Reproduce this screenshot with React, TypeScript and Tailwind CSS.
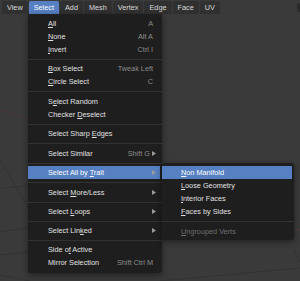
import React from 'react';

type Row =
  | { sep: true; h: number }
  | { sep?: false; label: string; key?: number; shortcut?: string; sub?: boolean; active?: boolean; off?: boolean };

const mainMenu: Row[] = [
  { label: 'All', key: 0, shortcut: 'A' },
  { label: 'None', key: 0, shortcut: 'Alt A' },
  { label: 'Invert', key: 0, shortcut: 'Ctrl I' },
  { sep: true, h: 6 },
  { label: 'Box Select', key: 0, shortcut: 'Tweak Left' },
  { label: 'Circle Select', key: 0, shortcut: 'C' },
  { sep: true, h: 7 },
  { label: 'Select Random', key: 1 },
  { label: 'Checker Deselect', key: 8 },
  { sep: true, h: 6 },
  { label: 'Select Sharp Edges', key: 13 },
  { sep: true, h: 7 },
  { label: 'Select Similar', shortcut: 'Shift G', sub: true },
  { sep: true, h: 6 },
  { label: 'Select All by Trait', key: 14, sub: true, active: true },
  { sep: true, h: 7 },
  { label: 'Select More/Less', key: 7, sub: true },
  { sep: true, h: 6 },
  { label: 'Select Loops', key: 7, sub: true },
  { sep: true, h: 6 },
  { label: 'Select Linked', key: 10, sub: true },
  { sep: true, h: 6 },
  { label: 'Side of Active', key: 6 },
  { label: 'Mirror Selection', shortcut: 'Shift Ctrl M' },
];

const traitMenu: Row[] = [
  { label: 'Non Manifold', key: 0, active: true },
  { label: 'Loose Geometry', key: 0 },
  { label: 'Interior Faces', key: 0 },
  { label: 'Faces by Sides', key: 0 },
  { sep: true, h: 7 },
  { label: 'Ungrouped Verts', key: 0, off: true },
];

const headerItems = ['View', 'Select', 'Add', 'Mesh', 'Vertex', 'Edge', 'Face', 'UV'];

function Label({ text, k }: { text: string; k?: number }) {
  if (k === undefined) return <span>{text}</span>;
  return (
    <span>
      {text.slice(0, k)}
      <span className="underline decoration-1 underline-offset-1">{text[k]}</span>
      {text.slice(k + 1)}
    </span>
  );
}

function Arrow() {
  return (
    <svg width="4" height="5" viewBox="0 0 4 5" className="absolute right-[4px] top-[4px]">
      <path d="M0 0 L4 2.5 L0 5 Z" fill="#9a9a9a" />
    </svg>
  );
}

function MenuRows({ rows, pl }: { rows: Row[]; pl: string }) {
  return (
    <>
      {rows.map((r, i) =>
        r.sep ? (
          <div key={i} className={`flex items-center ${r.h === 7 ? 'h-[7px]' : 'h-[6px]'}`}>
            <div className="h-px w-full bg-[#323232]" />
          </div>
        ) : (
          <div
            key={i}
            className={`relative flex h-[13px] items-center mr-[2px] ${pl} pr-[7px] ${
              r.active ? 'bg-[#5680c2] text-white' : r.off ? 'text-[#6e6e6e]' : 'text-[#e0e0e0]'
            }`}
          >
            <Label text={r.label} k={r.key} />
            {r.shortcut && (
              <span className={`ml-auto ${r.sub ? 'mr-[3px]' : ''} text-[#8c8c8c]`}>{r.shortcut}</span>
            )}
            {r.sub && <Arrow />}
          </div>
        )
      )}
    </>
  );
}

export default function App() {
  return (
    <div
      className="relative h-[281px] w-[300px] overflow-hidden bg-[#3a3a3a] text-[7.3px] leading-none"
      style={{ fontFamily: '"Liberation Sans", Arial, sans-serif' }}
    >
      {/* viewport grid */}
      <svg width="300" height="281" className="absolute inset-0">
        <g stroke="#333333" strokeWidth="1" fill="none">
          <line x1="0" y1="160" x2="30" y2="210" />
          <line x1="0" y1="232" x2="28" y2="228" />
          <line x1="0" y1="255" x2="28" y2="252" />
          <line x1="0" y1="188" x2="28" y2="186" />
          <line x1="0" y1="275" x2="30" y2="281" />
          <line x1="294" y1="250" x2="300" y2="262" />
          <line x1="160" y1="281" x2="300" y2="268" />
        </g>
        <line x1="0" y1="110" x2="30" y2="120" stroke="#4a3434" strokeWidth="1" />
        <line x1="294" y1="228" x2="300" y2="230" stroke="#5a3a3a" strokeWidth="1" />
      </svg>

      {/* header */}
      <div className="relative flex h-[14px] items-stretch gap-[1px] pl-[2px] pt-[1px]">
        {headerItems.map((h) => (
          <div
            key={h}
            className={`flex items-center rounded-t-[2px] px-[5px] ${
              h === 'Select' ? 'bg-[#5680c2] text-white' : 'bg-[#303030] text-[#d8d8d8]'
            }`}
          >
            {h}
          </div>
        ))}
        <div className="ml-auto mt-[2px] h-[9px] w-[3px] rounded-l-[2px] bg-[#2a2a2a]" />
      </div>

      {/* Select menu */}
      <div className="absolute left-[28px] top-[14px] w-[134px] rounded-b-[3px] bg-[#1e1e1e] pt-[3px] pb-[4px] shadow-[0_2px_6px_rgba(0,0,0,0.45)]">
        <MenuRows rows={mainMenu} pl="pl-[20px]" />
      </div>

      {/* Select All by Trait submenu */}
      <div className="absolute left-[162px] top-[163px] w-[132px] rounded-[3px] bg-[#1e1e1e] pt-[3px] pb-[2px] shadow-[0_2px_6px_rgba(0,0,0,0.45)]">
        <MenuRows rows={traitMenu} pl="pl-[19px]" />
      </div>
    </div>
  );
}
